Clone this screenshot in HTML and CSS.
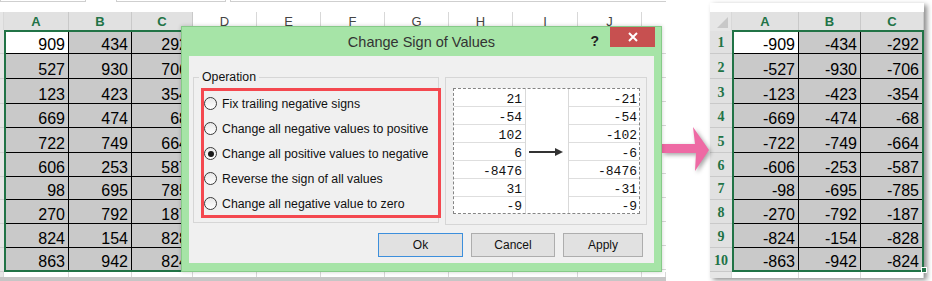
FILE: index.html
```html
<!DOCTYPE html>
<html>
<head>
<meta charset="utf-8">
<link rel="stylesheet" href="styles.css">
</head>
<body>
<div class="stage">
  <section class="sheet sheet-left">
    <div class="topbar"><span class="tb tb1"></span><span class="tb tb2"></span><span class="tb tb3"></span></div>
    <div class="colhdr lcols">
      <div class="h"></div><div class="h on">A</div><div class="h on">B</div><div class="h on">C</div><div class="h">D</div><div class="h">E</div><div class="h">F</div><div class="h">G</div><div class="h">H</div><div class="h">I</div><div class="h">J</div><div class="h last"></div>
    </div>
    <div class="body">
      <div class="sliver rows"><div></div><div></div><div></div><div></div><div></div><div></div><div></div><div></div><div></div><div></div></div>
      <div class="selgrid lsel rows">
        <div class="c active">909</div><div class="c">434</div><div class="c">292</div>
        <div class="c">527</div><div class="c">930</div><div class="c">706</div>
        <div class="c">123</div><div class="c">423</div><div class="c">354</div>
        <div class="c">669</div><div class="c">474</div><div class="c">68</div>
        <div class="c">722</div><div class="c">749</div><div class="c">664</div>
        <div class="c">606</div><div class="c">253</div><div class="c">587</div>
        <div class="c">98</div><div class="c">695</div><div class="c">785</div>
        <div class="c">270</div><div class="c">792</div><div class="c">187</div>
        <div class="c">824</div><div class="c">154</div><div class="c">828</div>
        <div class="c">863</div><div class="c">942</div><div class="c">824</div>
      </div>
      <div class="rest"></div>
    </div>
    <div class="row11 lcols"><div></div><div></div><div></div><div></div><div></div><div></div><div></div><div></div><div></div><div></div><div></div><div></div></div>
  </section>

  <section class="sheet sheet-right">
    <div class="rtop"></div>
    <div class="colhdr rcols">
      <div class="h corner"><span class="tri"></span></div><div class="h on">A</div><div class="h on">B</div><div class="h on">C</div>
    </div>
    <div class="body">
      <div class="rowhdr">
        <div>1</div><div>2</div><div>3</div><div>4</div><div>5</div><div>6</div><div>7</div><div>8</div><div>9</div><div>10</div>
      </div>
      <div class="selgrid rsel rows">
        <div class="c active">-909</div><div class="c">-434</div><div class="c">-292</div>
        <div class="c">-527</div><div class="c">-930</div><div class="c">-706</div>
        <div class="c">-123</div><div class="c">-423</div><div class="c">-354</div>
        <div class="c">-669</div><div class="c">-474</div><div class="c">-68</div>
        <div class="c">-722</div><div class="c">-749</div><div class="c">-664</div>
        <div class="c">-606</div><div class="c">-253</div><div class="c">-587</div>
        <div class="c">-98</div><div class="c">-695</div><div class="c">-785</div>
        <div class="c">-270</div><div class="c">-792</div><div class="c">-187</div>
        <div class="c">-824</div><div class="c">-154</div><div class="c">-828</div>
        <div class="c">-863</div><div class="c">-942</div><div class="c">-824</div>
      </div>
    </div>
    <div class="row11 rcols"><div></div><div></div><div></div><div></div></div>
    <span class="handle"></span>
  </section>

  <svg class="pink-arrow" width="56" height="56" viewBox="0 0 56 56">
    <path d="M4 22 L37 22 L35 5 L51 28 L37 49 L38 31 L4 31 Z" fill="#ee6aa4"/>
  </svg>

  <div class="dialog">
    <div class="titlebar">
      <span class="title">Change Sign of Values</span>
      <div class="controls">
        <span class="help">?</span>
        <span class="close"><svg width="10" height="10" viewBox="0 0 10 10"><path d="M1 1 L9 9 M9 1 L1 9" stroke="#fff" stroke-width="2"/></svg></span>
      </div>
    </div>
    <div class="content">
      <div class="groups">
        <fieldset class="group ops">
          <legend>Operation</legend>
          <div class="highlight">
            <label class="radio"><span class="dot"></span>Fix trailing negative signs</label>
            <label class="radio"><span class="dot"></span>Change all negative values to positive</label>
            <label class="radio"><span class="dot checked"></span>Change all positive values to negative</label>
            <label class="radio"><span class="dot"></span>Reverse the sign of all values</label>
            <label class="radio"><span class="dot"></span>Change all negative value to zero</label>
          </div>
        </fieldset>
        <div class="group preview">
          <div class="sample">
            <div class="col col-in">
              <div class="n">21</div><div class="n">-54</div><div class="n">102</div><div class="n">6</div><div class="n">-8476</div><div class="n">31</div><div class="n">-9</div>
            </div>
            <div class="col col-mid">
              <svg class="mini-arrow" width="36" height="10" viewBox="0 0 36 10"><path d="M0 5 H28" stroke="#333" stroke-width="2"/><path d="M26 1 L34 5 L26 9 Z" fill="#333"/></svg>
            </div>
            <div class="col col-out">
              <div class="n">-21</div><div class="n">-54</div><div class="n">-102</div><div class="n">-6</div><div class="n">-8476</div><div class="n">-31</div><div class="n">-9</div>
            </div>
          </div>
        </div>
      </div>
      <div class="buttons">
        <button class="btn primary">Ok</button>
        <button class="btn cancel">Cancel</button>
        <button class="btn apply">Apply</button>
      </div>
    </div>
  </div>
</div>
</body>
</html>
```

FILE: styles.css
```css
* { box-sizing: border-box; }
html, body { margin: 0; padding: 0; }
body {
  width: 932px;
  height: 281px;
  overflow: hidden;
  background: #fff;
  font-family: "Liberation Sans", Arial, sans-serif;
}
.stage {
  position: relative;
  display: flex;
  align-items: flex-start;
  width: 932px;
  height: 281px;
}

/* ---------- sheets ---------- */
.sheet { flex: none; }
.sheet-left { width: 666px; }
.topbar { height: 12px; display: flex; }
.tb { height: 2px; border: 1px solid #cfcfcf; border-top: none; }
.tb1 { width: 86px; }
.tb2 { width: 110px; margin-left: 30px; }
.tb3 { flex: 1; margin-left: 4px; border-right: none; }

.colhdr { display: grid; height: 18px; }
.lcols { grid-template-columns: 4px 65px 63px 61px 64px 64px 64px 64px 64px 65px 64px 24px; }
.rcols { grid-template-columns: 22px 67px 62px 63px; }
.h {
  border-right: 1px solid #d8d8d8;
  font-size: 13px;
  color: #444;
  text-align: center;
  line-height: 18px;
  padding-top: 1px;
  background: #fff;
}
.h.on {
  background: #e1e1e1;
  color: #217346;
  font-weight: bold;
  border-right-color: #c9c9c9;
}
.h.last { border-right: none; }
.lcols .h:first-child { background: #e6e6e6; }

.body { display: flex; }
.rows { grid-template-rows: 22px 25px 25px 24px 25px 24px 23px 24px 24px 22px; }
.sliver { width: 4px; display: grid; grid-template-rows: 24px 25px 25px 24px 25px 24px 23px 24px 24px 24px; background: #e6e6e6; }
.sliver div { border-bottom: 1px solid #d0d0d0; }

.selgrid {
  display: grid;
  border: 2px solid #217346;
  background: #c9c9c9;
}
.lsel { width: 189px; grid-template-columns: 63px 63px 59px; }
.rsel { width: 192px; grid-template-columns: 65px 62px 61px; }
.c {
  display: flex;
  align-items: flex-end;
  justify-content: flex-end;
  padding-right: 3px;
  font-size: 16px;
  line-height: 16px;
  color: #000;
  border-right: 1px solid #000;
  border-bottom: 1px solid #000;
  overflow: hidden;
  white-space: nowrap;
}
.c:nth-child(3n) { border-right: none; }
.c:nth-last-child(-n+3) { border-bottom: none; }
.c.active { background: #fff; }

.rest {
  width: 473px;
  height: 242px;
  background-image:
    linear-gradient(to right, transparent 63px, #d8d8d8 63px, #d8d8d8 64px, transparent 64px),
    linear-gradient(to bottom, transparent 23px, #d8d8d8 23px, #d8d8d8 24px, transparent 24px);
  background-size: 64px 100%, 100% 24px;
}

.row11 { display: grid; height: 5px; }
.row11 div { border-right: 1px solid #d8d8d8; }
.sheet-left .row11 div:first-child { background: #e6e6e6; }
.sheet-left .row11 { border-bottom: 4px solid #c6c6c6; height: 9px; }

/* right sheet */
.sheet-right {
  position: relative;
  width: 214px;
  margin-left: 44px;
  margin-top: 3px;
  background: #fff;
  box-shadow: 3px 2px 5px rgba(0, 0, 0, 0.45);
}
.rtop { height: 9px; }
.corner { position: relative; background: #e6e6e6; }
.tri {
  position: absolute;
  right: 3px;
  bottom: 3px;
  width: 0;
  height: 0;
  border-left: 11px solid transparent;
  border-bottom: 11px solid #c8c8c8;
}
.rowhdr {
  width: 22px;
  display: grid;
  grid-template-rows: 24px 25px 25px 24px 25px 24px 23px 24px 24px 24px;
  background: #e1e1e1;
}
.rowhdr div {
  border-bottom: 1px solid #c9c9c9;
  font-family: "Liberation Serif", "Times New Roman", serif;
  font-weight: bold;
  font-size: 14px;
  color: #217346;
  text-align: center;
  line-height: 14px;
  display: flex;
  align-items: flex-end;
  justify-content: center;
  padding-bottom: 3px;
}
.sheet-right .row11 { height: 6px; }
.sheet-right .row11 div:first-child { background: #e6e6e6; }
.handle {
  position: absolute;
  right: -3px;
  bottom: 5px;
  width: 6px;
  height: 6px;
  background: #217346;
  border: 1px solid #fff;
}

/* pink arrow */
.pink-arrow {
  position: absolute;
  left: 658px;
  top: 122px;
  filter: drop-shadow(2px 2px 2px rgba(0, 0, 0, 0.35));
}

/* ---------- dialog ---------- */
.dialog {
  position: absolute;
  left: 181px;
  top: 26px;
  width: 481px;
  height: 246px;
  border: 1px solid #86ca88;
  background: #a6e4a7;
  padding: 0 7px 8px 7px;
  display: flex;
  flex-direction: column;
  box-shadow: 0 0 4px rgba(0, 0, 0, 0.2);
}
.titlebar {
  height: 29px;
  display: grid;
  flex: none;
}
.title {
  grid-area: 1 / 1;
  justify-self: center;
  align-self: center;
  font-size: 14.5px;
  color: #333;
  padding-top: 1px;
}
.controls {
  grid-area: 1 / 1;
  justify-self: end;
  display: flex;
  align-items: flex-start;
  margin-right: -1px;
}
.help {
  font-weight: bold;
  font-size: 14px;
  color: #222;
  margin-top: 6px;
  margin-right: 11px;
}
.close {
  width: 45px;
  height: 20px;
  background: #c75050;
  display: flex;
  align-items: center;
  justify-content: center;
}
.content {
  flex: 1;
  background: #f0f0f0;
  padding: 14px 7px 0 4px;
  display: flex;
  flex-direction: column;
}
.groups { display: flex; gap: 6px; align-items: flex-start; }
.group {
  margin: 0;
  border: 1px solid #d6d6d6;
  min-width: 0;
}
.ops {
  width: 246px;
  padding: 0 0 4px 7px;
}
.ops legend {
  margin-left: -2px;
  padding: 0 3px;
  font-size: 12.3px;
  line-height: 14px;
  color: #111;
}
.highlight {
  margin-top: 4px;
  width: 240px;
  height: 130px;
  margin-right: -3px;
  border: 3px solid #f4484f;
  display: flex;
  flex-direction: column;
}
.radio {
  height: 25px;
  flex: none;
  display: flex;
  align-items: center;
  gap: 5px;
  font-size: 12.3px;
  color: #111;
  white-space: nowrap;
}
.dot {
  width: 13px;
  height: 13px;
  border-radius: 50%;
  border: 1px solid #3a3a3a;
  background: linear-gradient(#e8e8e8, #ffffff);
  display: flex;
  align-items: center;
  justify-content: center;
  flex: none;
}
.dot.checked::after {
  content: "";
  width: 6px;
  height: 6px;
  border-radius: 50%;
  background: #1a1a1a;
}
.preview {
  width: 202px;
  height: 148px;
  margin-top: 7px;
  padding: 10px 0 0 7px;
}
.sample {
  width: 187px;
  height: 126px;
  border: 1px dashed #858585;
  background: #fff;
  display: flex;
}
.col { display: flex; flex-direction: column; }
.col-in { width: 72px; border-right: 1px solid #d9d9d9; }
.col-mid { width: 43px; border-right: 1px solid #d9d9d9; padding-top: 58px; padding-left: 3px; }
.col-out { width: 70px; }
.n {
  height: 18px;
  flex: none;
  border-bottom: 1px solid #dedede;
  font-family: "Liberation Mono", "Courier New", monospace;
  font-size: 13px;
  line-height: 13px;
  padding-top: 4px;
  text-align: right;
  padding-right: 3px;
  color: #111;
}
.col-out .n { padding-right: 2px; }
.n:last-child { border-bottom: none; height: 16px; padding-top: 3px; }
.buttons {
  margin-top: 8px;
  display: flex;
  justify-content: flex-end;
  gap: 8px;
  padding-right: 4px;
}
.btn {
  height: 24px;
  border: 1px solid #adadad;
  background: #e1e1e1;
  font-family: "Liberation Sans", Arial, sans-serif;
  font-size: 12px;
  color: #111;
  padding: 0;
  margin: 0;
}
.btn.primary { width: 85px; border-color: #3c8fdc; }
.btn.cancel { width: 84px; }
.btn.apply { width: 80px; }
```
